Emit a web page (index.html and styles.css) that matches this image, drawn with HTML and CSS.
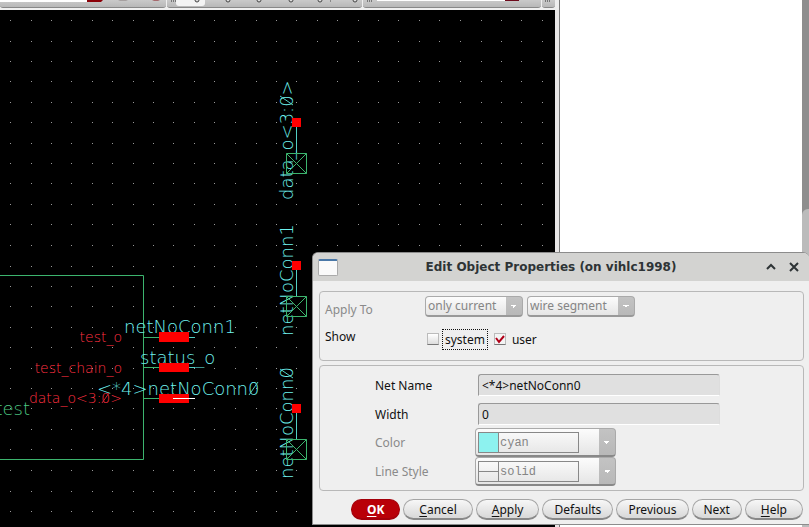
FILE: index.html
```html
<!DOCTYPE html>
<html lang="en">
<head>
<meta charset="utf-8">
<title>Edit Object Properties</title>
<link rel="stylesheet" href="styles.css">
</head>
<body>
<div class="desktop">
  <main class="editor">
    <div class="toolbar">
      <div class="tool-group group-a">
        <svg class="tool-art" aria-hidden="true"><path fill="#fff" d="M0 0h87v2H0z"/><path fill="#8b0008" d="M87 0h16l-2 2H87z"/><path fill="#a6a0a0" d="M118 0h10l-2 1h-6z"/><path fill="#a66a6e" d="M152 0h8l-2 1h-4z"/></svg>
      </div>
      <div class="tool-group group-b">
        <svg class="tool-art" aria-hidden="true">
          <path stroke="#777" d="M4.500 0v2M6.500 0v2M8.500 0v2"/>
          <path fill="#f4f4f4" d="M9 0h29v3q0 3-3 3H12q-3 0-3-3z"/>
          <g fill="#ddd" stroke="#444"><circle cx="30" cy="0" r="2"/><circle cx="61" cy="0" r="2"/><circle cx="92" cy="0" r="2"/><circle cx="124" cy="0" r="2"/><circle cx="153" cy="0" r="2"/><circle cx="188" cy="0" r="2"/></g>
          <path stroke="#888" d="M163.500 0v2"/>
        </svg>
      </div>
      <div class="tool-group group-c">
        <svg class="tool-art" aria-hidden="true"><path stroke="#777" d="M4.500 0v2M6.500 0v2M8.500 0v2"/><path fill="#fff" d="M14 0h128v1H14z"/><path fill="#6d0a1c" d="M142 0h14v1h-14z"/></svg>
      </div>
      <div class="tool-group group-d">
        <svg class="tool-art" aria-hidden="true"><path stroke="#777" d="M3.500 0v2M5.500 0v2M7.500 0v2"/></svg>
      </div>
    </div>
    <svg class="schematic" role="img" aria-label="Schematic">
      <defs>
        <pattern id="grid" x="10" y="10" width="225" height="225" patternUnits="userSpaceOnUse">
          <g class="grid-row">
            <path d="M0 .5H225"/><path d="M0 21.500H225"/><path d="M0 41.500H225"/><path d="M0 61.500H225"/><path d="M0 82.500H225"/><path d="M0 102.500H225"/><path d="M0 123.500H225"/><path d="M0 143.500H225"/><path d="M0 163.500H225"/><path d="M0 184.500H225"/><path d="M0 204.500H225"/>
          </g>
        </pattern>
        <g id="noconn">
          <path class="net" d="M10.500 8V35"/>
          <path class="symbol" d="M.5 35.500h20v20H.5zM.5 35.500l20 20M20.500 35.500l-20 20"/>
          <path class="pin" d="M6 0h9v9H6z"/>
        </g>
      </defs>
      <rect width="100%" height="100%" fill="url(#grid)"/>
      <g transform="translate(0 -10)">
        <path class="symbol" d="M0 275.500H143.500V459.500H0M143 337.500h16M143 367.500h16M143 398.500h16"/>
        <text class="block-name" x="30" y="415">test</text>
        <g class="pin-name">
          <text x="122" y="342">test_o</text>
          <text x="122" y="373">test_chain_o</text>
          <text x="122" y="403">data_o&lt;3:0&gt;</text>
        </g>
        <g class="net-name">
          <text x="124" y="333">netNoConn1</text>
          <text x="140" y="364">status_o</text>
          <text x="97" y="395">&lt;*4&gt;netNoConn0</text>
          <text transform="translate(293 200) rotate(-90)">data_o&lt;3:0&gt;</text>
          <text transform="translate(293 336) rotate(-90)">netNoConn1</text>
          <text transform="translate(293 479) rotate(-90)">netNoConn0</text>
        </g>
        <path class="net" d="M249 395l9-13M293 378l-13-9M293 105l-13-9"/>
        <path class="pin-slash" d="M102 403l7-10"/>
        <path class="pin" d="M159 332h30v10h-30zM159 363h30v9h-30zM159 394h30v9h-30z"/>
        <path class="net" d="M189 337.500h6M189 367.500h6"/>
        <path class="selected" d="M173 398.500h22"/>
        <use href="#noconn" x="286" y="118"/>
        <use href="#noconn" x="286" y="261"/>
        <use href="#noconn" x="286" y="404"/>
      </g>
    </svg>
  </main>
  <aside class="side"><div class="scrollbar"><div class="thumb"></div></div></aside>

  <form class="dialog" aria-labelledby="title">
    <header class="titlebar">
      <span class="window-icon"></span>
      <h1 class="title" id="title">Edit Object Properties (on vihlc1998)</h1>
      <button class="title-button" type="button" aria-label="Shade"><svg width="12" height="12" viewBox="0 0 12 12"><path d="M2 8l4-4 4 4" fill="none" stroke="#2e3436" stroke-width="2"/></svg></button>
      <button class="title-button" type="button" aria-label="Close"><svg width="12" height="12" viewBox="0 0 12 12"><path d="M2 2l8 8M10 2l-8 8" fill="none" stroke="#2e3436" stroke-width="2"/></svg></button>
    </header>
    <div class="content">
      <section class="panel scope">
        <label class="muted" for="apply">Apply To</label>
        <div class="controls">
          <select class="combo narrow" id="apply" disabled><option>only current</option></select>
          <select class="combo wide" aria-label="Object type" disabled><option>wire segment</option></select>
        </div>
        <span>Show</span>
        <div class="controls checks">
          <input class="check" type="checkbox" id="system"><label class="check-label focused" for="system">system</label>
          <input class="check" type="checkbox" id="user" checked><label class="check-label" for="user">user</label>
        </div>
      </section>
      <section class="panel fields">
        <label for="net">Net Name</label><input class="text" id="net" value="&lt;*4&gt;netNoConn0">
        <label for="width">Width</label><input class="text" id="width" value="0">
        <label class="muted" for="color">Color</label>
        <div class="picker"><select class="combo" id="color" disabled><option>cyan</option></select><span class="sample"><i class="swatch cyan"></i></span></div>
        <label class="muted" for="line">Line Style</label>
        <div class="picker"><select class="combo" id="line" disabled><option>solid</option></select><span class="sample"><i class="swatch solid"></i></span></div>
      </section>
      <footer class="actions">
        <button class="action mnemonic primary" type="button"><u>O</u>K</button>
        <button class="action mnemonic" type="button"><u>C</u>ancel</button>
        <button class="action mnemonic" type="button"><u>A</u>pply</button>
        <button class="action" type="button">Defaults</button>
        <button class="action" type="button">Previous</button>
        <button class="action" type="button">Next</button>
        <button class="action mnemonic" type="button"><u>H</u>elp</button>
      </footer>
    </div>
  </form>
</div>
</body>
</html>
```
FILE: styles.css
```css
* { box-sizing: border-box; }
body { margin: 0; background: #000; color: #111; font: 12px/16px "Noto Sans", sans-serif; }
.desktop { position: relative; display: flex; min-height: 100vh; }

.editor { flex: 560 1 0; display: flex; flex-direction: column; background: #000; border-right: 1px solid #777; }
.toolbar { display: flex; gap: 1px; height: 10px; padding-bottom: 2px; background: #efefef; }
.tool-group { height: 8px; background: linear-gradient(#cacaca, #b8b8b8); border-bottom: 1px solid #888; border-radius: 0 0 3px 3px; overflow: hidden; }
.tool-art { display: block; width: 100%; height: 7px; }
.group-a { flex: 166; }
.group-b { flex: 195; }
.group-c { flex: 178; }
.group-d { flex: 13; margin-right: 4px; }
.schematic { flex: 1; width: 100%; border-right: 4px solid #e8e6e6; font-family: "DejaVu Sans", sans-serif; font-weight: 200; }
.grid-row { stroke: #999; stroke-dasharray: 1 20 1 19 1 19 1 20 1 19 1 20 1 19 1 19 1 20 1 19 1 20; }
.symbol { fill: none; stroke: #3cb46e; }
.net { stroke: #52cfc4; }
.selected { stroke: #fff; }
.pin { fill: #f00; }
.pin-slash { stroke: #d02030; }
.net-name { fill: #6ff2ee; font-size: 18px; }
.pin-name { fill: #ff3040; font-size: 14px; text-anchor: end; }
.block-name { fill: #4cc882; font-size: 18px; text-anchor: end; }

.side { flex: 249 1 0; display: flex; justify-content: flex-end; background: #fff; }
.scrollbar { width: 7px; padding-top: 209px; background: #8e8e8e; }
.thumb { height: 100%; background: #bbb; border-radius: 6px 0 0 0; }

.dialog { position: absolute; left: 312px; right: 0; top: 252px; background: #efefef; border: 1px solid #8c8c8c; border-width: 1px 0 1px 1px; border-radius: 6px 6px 0 0; overflow: hidden; }
.titlebar { display: flex; align-items: center; height: 28px; padding: 0 9px 0 5px; background: #d3d3d1; color: #2e3436; }
.window-icon { width: 20px; height: 17px; background: #fafafa; border: 1px solid #aaa; border-top: 2px solid #4a78a8; border-radius: 2px; }
.title { flex: 1; margin: 0; padding-left: 10px; font: bold 12px/16px "DejaVu Sans", sans-serif; text-align: center; }
.title-button { display: flex; padding: 0; margin-left: 11px; border: 0; background: none; }
.content { padding: 10px 5px 4px 6px; }
.panel { display: grid; align-items: center; border: 1px solid #b8b8b8; border-radius: 4px; }
.muted { color: #8a8a8a; }
.scope { grid-template-columns: 100px 1fr; grid-template-rows: 27px 31px; height: 70px; padding: 2px 5px; align-content: start; }
.controls { display: flex; align-items: center; gap: 4px; }
.scope > .muted { padding-top: 4px; }
.scope > .controls { margin-top: -2px; }
.scope > .checks { gap: 2px; padding-left: 2px; margin-top: 5px; }
.combo { appearance: none; height: 21px; padding: 0 20px 0 2px; border: 1px solid #aaa; border-bottom: 2px solid #999; border-radius: 4px; font: inherit; color: #858585; opacity: 1;
  background-image: linear-gradient(to bottom right, #fff 50%, transparent 50%), linear-gradient(to bottom left, #fff 50%, transparent 50%), linear-gradient(#c3c3c3, #b8b8b8), linear-gradient(#fcfcfc, #e5e5e5);
  background-position: right 5px center, right 8px center, right center, left top; background-size: 3px 3px, 3px 3px, 16px 100%, 100% 100%; background-repeat: no-repeat; }
.narrow { width: 98px; }
.wide { width: 108px; }
.check { appearance: none; width: 12px; height: 12px; margin: 0 1px 0 0; border: 1px solid #bbb; border-bottom-color: #777; background: linear-gradient(#fff, #ddd); }
.check:checked { background: url("data:image/svg+xml,%3Csvg xmlns='http://www.w3.org/2000/svg' viewBox='0 0 10 10'%3E%3Cpath d='M1 4l3 4 5-6' fill='none' stroke='%23b00018' stroke-width='2'/%3E%3C/svg%3E") #f4f4f4; }
.check-label { padding: 0 2px; border: 1px dotted transparent; line-height: 19px; }
.focused { border-color: #111; margin-right: 4px; }

.fields { grid-template-columns: 100px 1fr; grid-auto-rows: 29px; margin-top: 4px; padding: 4px 83px 4px 55px; }
.fields > label { padding-top: 2px; }
.text { height: 22px; margin: 0 0 0 3px; padding: 1px 3px 0; border: 1px solid #999; border-right-color: #ddd; border-bottom-color: #fff; border-radius: 3px 3px 0 0; background: #e0e0e0; color: #111; font: inherit; }
.fields > .muted { padding-top: 0; }
.picker { position: relative; width: 141px; height: 29px; }
.picker .combo { width: 100%; height: 29px; padding: 2px 20px 0 24px; font-family: "Liberation Mono", monospace; border-bottom-color: #888; }
.sample { position: absolute; left: 3px; top: 4px; width: 101px; height: 21px; border: 1px solid #888; pointer-events: none; }
.swatch { display: block; width: 20px; height: 19px; border-right: 1px solid #888; }
.cyan { background: #8df2ef; }
.solid { background: linear-gradient(#888, #888) center / 100% 1px no-repeat; }

.actions { display: flex; justify-content: flex-end; gap: 3px; margin-top: 8px; padding-right: 1px; }
.action { height: 21px; padding: 0 11px; border: 1px solid #a5a5a5; border-bottom: 2px solid #888; border-radius: 11px; background: linear-gradient(#f7f7f7, #d8d8d8); color: #111; font: inherit; line-height: 17px; }
.action u { text-underline-offset: 2px; }
.mnemonic { padding: 0 15px; }
.primary { background: #b90008; border-color: #a3000a; color: #fff; font-weight: 700; }
```
